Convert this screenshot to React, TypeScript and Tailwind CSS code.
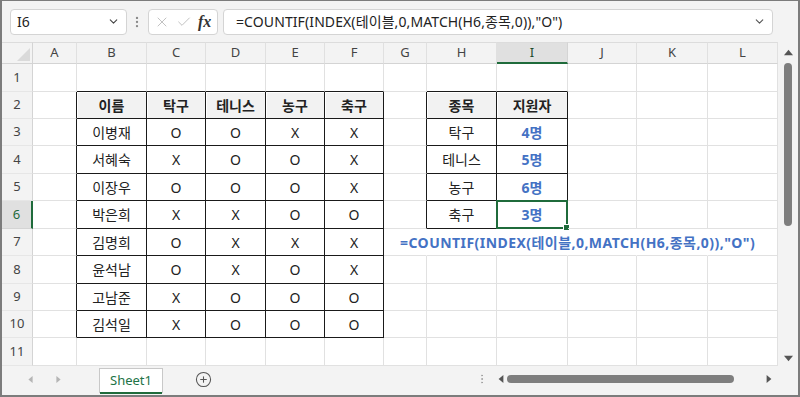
import React from 'react';
import { ChevronDown, X, Check, EllipsisVertical, CirclePlus } from 'lucide-react';

const COLS = ['A', 'B', 'C', 'D', 'E', 'F', 'G', 'H', 'I', 'J', 'K', 'L'];
const ROW_H = [28, 27, 27, 28, 27, 28, 27, 28, 27, 27, 28];

const FORMULA = '=COUNTIF(INDEX(테이블,0,MATCH(H6,종목,0)),"O")';

const scores = [
  ['이름', '탁구', '테니스', '농구', '축구'],
  ['이병재', 'O', 'O', 'X', 'X'],
  ['서혜숙', 'X', 'O', 'O', 'X'],
  ['이장우', 'O', 'O', 'O', 'X'],
  ['박은희', 'X', 'X', 'O', 'O'],
  ['김명희', 'O', 'X', 'X', 'X'],
  ['윤석남', 'O', 'X', 'O', 'X'],
  ['고남준', 'X', 'O', 'O', 'O'],
  ['김석일', 'X', 'O', 'O', 'O'],
];

const summary = [
  ['종목', '지원자'],
  ['탁구', '4명'],
  ['테니스', '5명'],
  ['농구', '6명'],
  ['축구', '3명'],
];

function Tri({ dir, className }: { dir: 'up' | 'down' | 'left' | 'right'; className?: string }) {
  const pts = {
    up: '0,8 5,2 10,8',
    down: '0,2 5,8 10,2',
    left: '8,0 2,5 8,10',
    right: '2,0 8,5 2,10',
  }[dir];
  return (
    <svg viewBox="0 0 10 10" className={className}>
      <polygon points={pts} fill="currentColor" />
    </svg>
  );
}

function Cell({ r, c }: { r: number; c: number }) {
  const inLeft = r >= 2 && r <= 10 && c >= 1 && c <= 5;
  const inRight = r >= 2 && r <= 6 && (c === 7 || c === 8);

  const rightBlack = (r >= 2 && r <= 10 && c <= 5) || (r >= 2 && r <= 6 && c >= 6 && c <= 8);
  const bottomBlack = (r >= 1 && r <= 10 && c >= 1 && c <= 5) || (r >= 1 && r <= 6 && (c === 7 || c === 8));
  const hideRight = r === 7 && c >= 6 && c <= 10;

  const rightCls = rightBlack ? 'border-r-[#1a1a1a]' : hideRight ? 'border-r-transparent' : 'border-r-[#e1e1e1]';
  const bottomCls = bottomBlack ? 'border-b-[#1a1a1a]' : 'border-b-[#e1e1e1]';
  const h = ROW_H[r - 1] === 28 ? 'h-[28px]' : 'h-[27px]';

  let content: React.ReactNode = null;
  let fill = '';
  if (inLeft) {
    if (r === 2) fill = 'bg-[#f2f2f2] shadow-[inset_1px_1px_0_#fff] font-bold';
    content = scores[r - 2][c - 1];
  } else if (inRight) {
    if (r === 2) fill = 'bg-[#f2f2f2] shadow-[inset_1px_1px_0_#fff] font-bold';
    else if (c === 8) fill = 'font-bold text-[#4472c4]';
    content = summary[r - 2][c - 7];
  }

  const selected = r === 6 && c === 8;

  return (
    <div className={`relative flex items-center justify-center border-r border-b ${rightCls} ${bottomCls} ${h} ${fill}`}>
      {content}
      {r === 7 && c === 6 && (
        <span className="absolute left-[16px] top-0 z-10 flex h-full items-center whitespace-nowrap font-bold tracking-[0.45px] text-[#4472c4]">
          {FORMULA}
        </span>
      )}
      {selected && (
        <div className="absolute -left-[1px] -top-[1px] -right-[1px] -bottom-[1px] border-2 border-[#1f6b3b]">
          <div className="absolute -right-[4px] -bottom-[4px] h-[5px] w-[5px] bg-[#1f6b3b] border border-white box-content" />
        </div>
      )}
    </div>
  );
}

export default function App() {
  return (
    <div
      className="w-[800px] h-[397px] overflow-hidden border-t border-x-2 border-b-2 border-[#7c7c7c] bg-[#f3f3f3] flex flex-col text-[14px] text-[#222]"
      style={{ fontFamily: '"Noto Sans", "Noto Sans CJK KR", sans-serif' }}
    >
      {/* formula bar */}
      <div className="h-[41px] flex items-center pl-[8px] shrink-0">
        <div className="w-[117px] h-[26px] bg-white border border-[#d4d4d4] rounded-[4px] flex items-center justify-between pl-[6px] pr-[6px]">
          <span className="text-[14px]">I6</span>
          <ChevronDown className="w-[13px] h-[13px] text-[#444]" strokeWidth={2} />
        </div>
        <EllipsisVertical className="w-[14px] h-[14px] text-[#8a8a8a] ml-[3px]" strokeWidth={2} />
        <div className="ml-[4px] w-[70px] h-[26px] bg-white border border-[#d4d4d4] rounded-[4px] flex items-center pl-[5px] gap-[6px]">
          <X className="w-[16px] h-[16px] text-[#c2c2c2]" strokeWidth={1.5} />
          <Check className="w-[16px] h-[16px] text-[#c2c2c2]" strokeWidth={1.5} />
          <span
            className="italic font-bold text-[16px] text-[#333] leading-none"
            style={{ fontFamily: '"Liberation Serif", serif' }}
          >
            fx
          </span>
        </div>
        <div className="ml-[5px] w-[550px] h-[26px] bg-white border border-[#d4d4d4] rounded-[4px] flex items-center justify-between pl-[12px] pr-[6px]">
          <span className="whitespace-nowrap tracking-[0.1px]">{FORMULA}</span>
          <ChevronDown className="w-[13px] h-[13px] text-[#555]" strokeWidth={2} />
        </div>
      </div>

      {/* sheet area */}
      <div className="flex flex-1 min-h-0">
        <div className="bg-white grid grid-cols-[31px_44px_70px_59px_60px_59px_59px_43px_70px_71px_69px_71px_70px] content-start">
          <div className="h-[22px] bg-[#f3f3f3] border-t border-[#dcdcdc] border-r border-r-[#d4d4d4] border-b border-b-[#d4d4d4] flex items-end justify-end pr-[2px] pb-[2px]">
            <svg viewBox="0 0 12 12" className="w-[13px] h-[13px]">
              <polygon points="12,0 12,12 0,12" fill="#dadada" />
            </svg>
          </div>
          {COLS.map((c, i) => (
            <div
              key={c}
              className={`h-[22px] border-t border-t-[#dcdcdc] flex items-center justify-center text-[13px] ${
                i === 8
                  ? 'bg-[#e0e0e0] border-b-2 border-b-[#1f6b3b] text-[#1f4d2e] border-r border-r-[#d4d4d4]'
                  : 'bg-[#f3f3f3] border-b border-b-[#d4d4d4] text-[#444] border-r border-r-[#e0e0e0]'
              }`}
            >
              {c}
            </div>
          ))}
          {ROW_H.map((_, ri) => {
            const r = ri + 1;
            return (
              <React.Fragment key={r}>
                <div
                  className={`flex items-center justify-center text-[13px] ${ROW_H[ri] === 28 ? 'h-[28px]' : 'h-[27px]'} ${
                    r === 6
                      ? 'bg-[#e0e0e0] text-[#1f6b3b] border-r-2 border-r-[#1f6b3b] border-b border-b-[#d4d4d4]'
                      : 'bg-[#f3f3f3] text-[#444] border-r border-r-[#d4d4d4] border-b border-b-[#e6e6e6]'
                  }`}
                >
                  {r}
                </div>
                {COLS.map((c, ci) => (
                  <Cell key={c} r={r} c={ci} />
                ))}
              </React.Fragment>
            );
          })}
        </div>

        {/* vertical scrollbar */}
        <div className="w-[20px] flex flex-col items-center pt-[6px] pb-[2px]">
          <Tri dir="up" className="w-[9px] h-[9px] text-[#555]" />
          <div className="mt-[6px] w-[8px] h-[163px] rounded-full bg-[#7e7e7e]" />
          <div className="flex-1" />
          <Tri dir="down" className="w-[9px] h-[9px] text-[#555]" />
        </div>
      </div>

      {/* sheet tabs */}
      <div className="h-[30px] shrink-0 flex items-start">
        <div className="w-[97px] h-[28px] flex items-center">
          <Tri dir="left" className="ml-[25px] w-[7px] h-[7px] text-[#b5b5b5]" />
          <Tri dir="right" className="ml-[21px] w-[7px] h-[7px] text-[#b5b5b5]" />
        </div>
        <div className="mt-[3px] w-[64px] h-[25px] bg-white border-x border-t border-[#c8c8c8] flex items-center justify-center text-[13px] text-[#217346] relative">
          Sheet1
          <div className="absolute left-0 right-0 -bottom-[1px] h-[2px] bg-[#1f6b3b]" />
        </div>
        <div className="h-[28px] flex items-center ml-[32px]">
          <CirclePlus className="w-[17px] h-[17px] text-[#555]" strokeWidth={1.5} />
        </div>
        <div className="h-[28px] flex items-center ml-[264px]">
          <EllipsisVertical className="w-[12px] h-[12px] text-[#a0a0a0]" strokeWidth={2} />
          <Tri dir="left" className="ml-[9px] w-[8px] h-[8px] text-[#555]" />
          <div className="ml-[2px] w-[227px] h-[8px] rounded-full bg-[#7e7e7e]" />
          <div className="w-[31px]" />
          <Tri dir="right" className="w-[8px] h-[8px] text-[#555]" />
        </div>
      </div>
    </div>
  );
}
